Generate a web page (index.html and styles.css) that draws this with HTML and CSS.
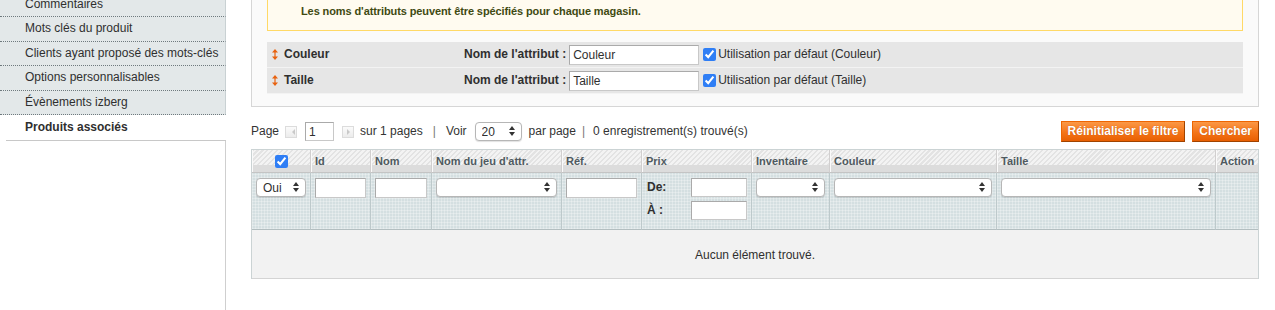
FILE: index.html
```html
<!DOCTYPE html>
<html lang="fr">
<head>
    <meta charset="UTF-8">
    <title>Produits associés</title>
    <link rel="stylesheet" href="styles.css">
</head>
<body>
<div class="page">

    <aside class="side-col">
        <ul class="tabs">
            <li><a href="#">Commentaires</a></li>
            <li><a href="#">Mots clés du produit</a></li>
            <li><a href="#">Clients ayant proposé des mots-clés</a></li>
            <li><a href="#">Options personnalisables</a></li>
            <li><a href="#">Évènements izberg</a></li>
            <li class="active"><a href="#">Produits associés</a></li>
        </ul>
        <div class="side-fill"></div>
    </aside>

    <div class="main-col">
        <div class="fieldset">
            <div class="notice">Les noms d'attributs peuvent être spécifiés pour chaque magasin.</div>
            <ul class="attributes">
                <li class="attribute">
                    <svg class="drag" width="6" height="11" viewBox="0 0 6 11"><path d="M3 0L6 3.5H0Z M3 11L0 7.5H6Z M2.4 3h1.2v5H2.4Z" fill="#e8620f"/></svg>
                    <span class="attr-title">Couleur</span>
                    <label class="attr-label" for="attr-couleur">Nom de l'attribut :</label>
                    <input class="input-text attr-input" id="attr-couleur" type="text" value="Couleur">
                    <label class="use-default"><input type="checkbox" checked> Utilisation par défaut (Couleur)</label>
                </li>
                <li class="attribute">
                    <svg class="drag" width="6" height="11" viewBox="0 0 6 11"><path d="M3 0L6 3.5H0Z M3 11L0 7.5H6Z M2.4 3h1.2v5H2.4Z" fill="#e8620f"/></svg>
                    <span class="attr-title">Taille</span>
                    <label class="attr-label" for="attr-taille">Nom de l'attribut :</label>
                    <input class="input-text attr-input" id="attr-taille" type="text" value="Taille">
                    <label class="use-default"><input type="checkbox" checked> Utilisation par défaut (Taille)</label>
                </li>
            </ul>
        </div>

        <div class="grid-actions">
            <div class="pager">
                Page
                <span class="pager-arrow prev"></span>
                <input class="input-text page-input" type="text" value="1">
                <span class="pager-arrow next"></span>
                <span>sur 1 pages</span>
                <span class="sep first">|</span>
                <span>Voir</span>
                <span class="select limit"><select><option>20</option></select></span>
                <span>par page</span>
                <span class="sep">|</span>
                <span>0 enregistrement(s) trouvé(s)</span>
            </div>
            <div class="buttons">
                <button class="btn" type="button">Réinitialiser le filtre</button>
                <button class="btn" type="button">Chercher</button>
            </div>
        </div>

        <table class="grid">
            <thead>
            <tr class="headings">
                <th class="c-check center"><input type="checkbox" checked></th>
                <th class="c-id">Id</th>
                <th class="c-name">Nom</th>
                <th class="c-set">Nom du jeu d'attr.</th>
                <th class="c-sku">Réf.</th>
                <th class="c-price">Prix</th>
                <th class="c-stock">Inventaire</th>
                <th class="c-color">Couleur</th>
                <th class="c-size">Taille</th>
                <th class="c-action">Action</th>
            </tr>
            <tr class="filter">
                <td><span class="select"><select><option>Oui</option></select></span></td>
                <td><input class="input-text" type="text"></td>
                <td><input class="input-text" type="text"></td>
                <td><span class="select"><select><option></option></select></span></td>
                <td><input class="input-text" type="text"></td>
                <td>
                    <div class="range">
                        <span>De:</span><input class="input-text" type="text">
                        <span>À :</span><input class="input-text" type="text">
                    </div>
                </td>
                <td><span class="select"><select><option></option></select></span></td>
                <td><span class="select"><select><option></option></select></span></td>
                <td><span class="select"><select><option></option></select></span></td>
                <td></td>
            </tr>
            </thead>
            <tbody>
            <tr class="empty">
                <td colspan="10">Aucun élément trouvé.</td>
            </tr>
            </tbody>
        </table>
    </div>

</div>
</body>
</html>
```

FILE: styles.css
```css
* {
    box-sizing: border-box;
}
body {
    margin: 0;
    background: #fff;
    color: #2f2f2f;
    font: 12px/1.3 "Liberation Sans", Arial, sans-serif;
    overflow: hidden;
}
.page {
    display: flex;
    min-height: 330px;
}

/* side tabs */
.side-col {
    width: 226px;
    flex-shrink: 0;
    display: flex;
    flex-direction: column;
}
.tabs {
    list-style: none;
    margin: -7.5px 0 0;
    padding: 0;
}
.tabs a {
    display: block;
    height: 24.5px;
    line-height: 23.5px;
    padding-left: 25px;
    background: #e3e8e9;
    border-bottom: 1px dotted #6f7a7e;
    border-right: 1px solid #c9d1d3;
    color: #2f2f2f;
    text-decoration: none;
}
.tabs .active a {
    height: 26px;
    line-height: 25px;
    margin-left: 6px;
    padding-left: 19px;
    background: #fff;
    font-weight: bold;
    border-bottom: 1px solid #c8c8c8;
    border-right: none;
}
.side-fill {
    flex: 1;
    border-right: 1px solid #cfcfcf;
}

/* main column */
.main-col {
    width: 1008px;
    margin: -18px 0 0 25px;
}
.fieldset {
    border: 1px solid #d6d6d6;
    background: #fafafa;
    padding: 15px 15px 12px;
}
.notice {
    border: 1px solid #ffd967;
    background: #fffbf0;
    color: #3f4a12;
    font-size: 11px;
    font-weight: bold;
    line-height: 13px;
    letter-spacing: -0.1px;
    padding: 6px 10px 12px 33px;
}
.attributes {
    list-style: none;
    margin: 11px 0 0;
    padding: 0;
}
.attribute {
    display: flex;
    align-items: center;
    height: 26px;
    padding-left: 5px;
    background: #e6e6e6;
    border-bottom: 1px solid #f3f3f3;
}
.drag {
    width: 6px;
    margin-right: 6px;
}
.attr-title {
    width: 180px;
    font-weight: bold;
}
.attr-label {
    font-weight: bold;
    margin-right: 3px;
}
.attr-input {
    width: 130px;
}
.use-default {
    display: flex;
    align-items: center;
    margin-left: 4px;
}
.use-default input {
    margin: 0 2px 0 0;
}
input[type="checkbox"] {
    width: 13px;
    height: 13px;
    accent-color: #2f7ef5;
}

.input-text {
    height: 20px;
    padding: 0 3px;
    border: 1px solid;
    border-color: #aaa #c8c8c8 #c8c8c8 #aaa;
    background: #fff;
    font: 12px "Liberation Sans", Arial, sans-serif;
    color: #2f2f2f;
}

/* pager + buttons */
.grid-actions {
    display: flex;
    justify-content: space-between;
    align-items: center;
    height: 21px;
    margin-top: 14px;
}
.pager {
    display: flex;
    align-items: center;
    color: #333;
}
.pager-arrow {
    position: relative;
    width: 12px;
    height: 12px;
    margin: 0 8px 0 6px;
    border: 1px solid #dcdcdc;
    background: linear-gradient(#fbfbfb, #ececec);
}
.pager-arrow::after {
    content: "";
    position: absolute;
    top: 2px;
    left: 3px;
    border: 3px solid transparent;
    border-right: 3px solid #c9c9c9;
}
.pager-arrow.next {
    margin: 0 6px 0 8px;
}
.pager-arrow.next::after {
    left: 4px;
    border-right-color: transparent;
    border-left: 3px solid #c9c9c9;
}
.page-input {
    width: 29px;
    height: 19px;
}
.sep {
    margin: 0 8px 0 6px;
    color: #777;
}
.sep.first {
    margin: 0 10px;
}
.select.limit {
    width: 47px;
    margin: 0 7px 0 8px;
}

.buttons {
    display: flex;
    gap: 7px;
}
.btn {
    height: 21px;
    padding: 0 6px 1px;
    border: 1px solid;
    border-color: #ed6502 #a04300 #a04300 #ed6502;
    background: linear-gradient(#fb9846, #f47519 55%, #e85f02);
    color: #fff;
    font: bold 12px "Liberation Sans", Arial, sans-serif;
    text-shadow: 0 0 1px #b84a00;
}

/* fake mac style select */
.select {
    position: relative;
    display: block;
    height: 19px;
}
.select select {
    appearance: none;
    width: 100%;
    height: 19px;
    padding: 0 14px 0 6px;
    border: 1px solid #b6b6b6;
    border-radius: 4px;
    background: #fff;
    box-shadow: 0 1px 1px rgba(0, 0, 0, .12);
    font: 12px "Liberation Sans", Arial, sans-serif;
    color: #2f2f2f;
}
.select::before,
.select::after {
    content: "";
    position: absolute;
    right: 7px;
    border-left: 3px solid transparent;
    border-right: 3px solid transparent;
    pointer-events: none;
}
.select::before {
    top: 4px;
    border-bottom: 4px solid #333;
}
.select::after {
    top: 10px;
    border-top: 4px solid #333;
}

/* grid */
.grid {
    width: 1008px;
    margin-top: 7px;
    table-layout: fixed;
    border-collapse: separate;
    border-spacing: 0;
    border: 1px solid #cbd3d4;
    border-bottom: none;
}
.grid th,
.grid td {
    padding: 0 4px;
    text-align: left;
}
.headings th {
    height: 23px;
    color: #4f5a60;
    font-size: 11px;
    font-weight: bold;
    border-right: 1px solid #d1cfcf;
    border-bottom: 1px solid #c4c4c4;
    box-shadow: inset 1px 0 #fafafa;
    background:
        linear-gradient(transparent 15px, #dcdcdc 15px),
        repeating-linear-gradient(135deg, #e3e3e3 0 1.5px, #f3f3f3 1.5px 3.5px);
}
.headings th:last-child,
.filter td:last-child {
    border-right: none;
}
.headings th.center {
    text-align: center;
    padding-top: 2px;
}
.c-check { width: 59px; }
.c-id { width: 60px; }
.c-name { width: 61px; }
.c-set { width: 130px; }
.c-sku { width: 80px; }
.c-price { width: 110px; }
.c-stock { width: 78px; }
.c-color { width: 167px; }
.c-size { width: 219px; }
.c-action { width: 42px; }

.filter td {
    height: 57px;
    padding-top: 5px;
    vertical-align: top;
    border-right: 1px solid #bdc9cb;
    border-bottom: 1px solid #b3bec0;
    background-color: #d4dfe1;
    background-image:
        repeating-linear-gradient(90deg, rgba(255, 255, 255, .28) 0 1px, transparent 1px 3px),
        repeating-linear-gradient(0deg, rgba(255, 255, 255, .28) 0 1px, transparent 1px 3px);
}
.filter .input-text {
    width: 100%;
}
.range {
    display: grid;
    grid-template-columns: 1fr 56px;
    row-gap: 4px;
    align-items: center;
    font-weight: bold;
    padding-left: 1px;
}
.range .input-text {
    height: 19px;
}

.empty td {
    height: 49px;
    padding-top: 3px;
    text-align: center;
    background: #f2f2f2;
    border-bottom: 1px solid #d4d4d4;
}
```
